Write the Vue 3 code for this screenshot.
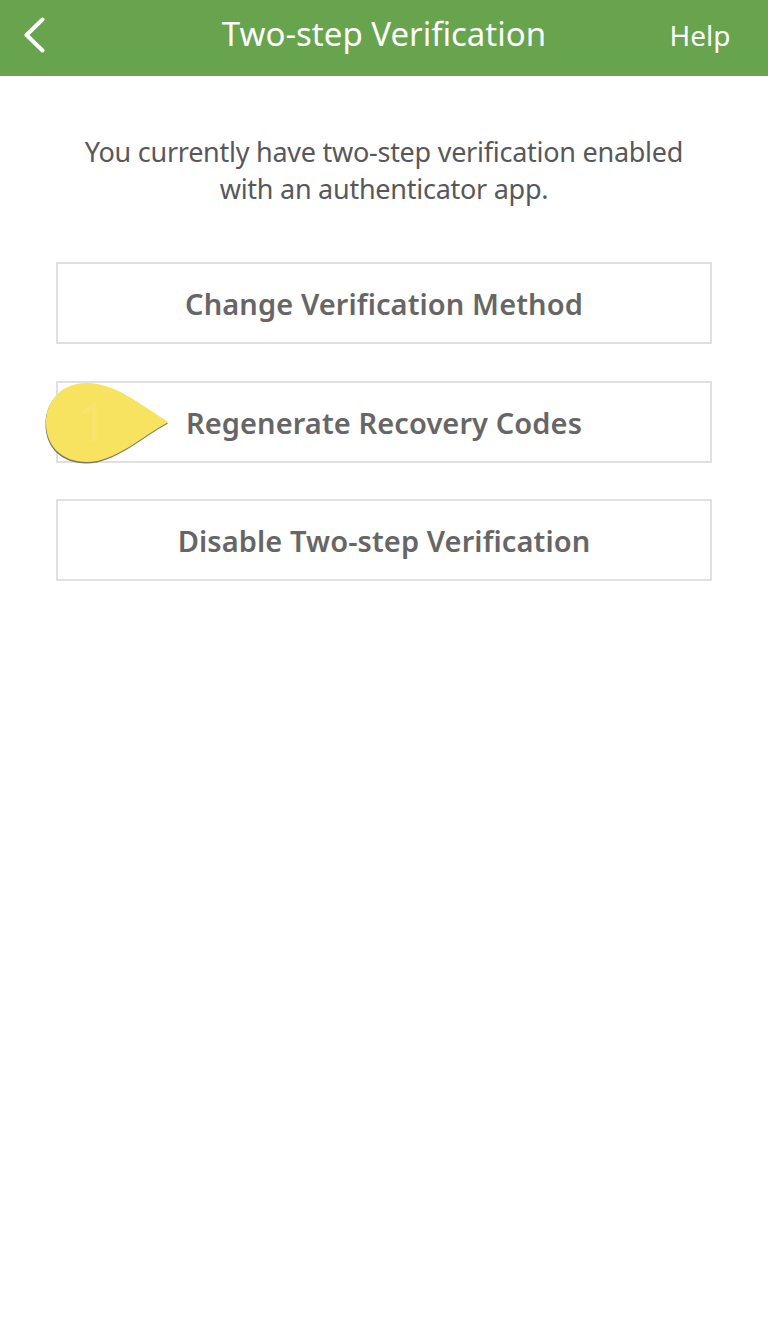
<template>
	<div class="page">
		<!-- Top bar -->
		<header class="top-bar">
			<svg class="back-icon" width="24" height="36" viewBox="0 0 24 36">
				<path d="M20.5 2.5 L4.5 18 L20.5 33.5" fill="none" stroke="#fff" stroke-width="4" stroke-linecap="round" stroke-linejoin="round" />
			</svg>
			<h1 class="title">Two-step Verification</h1>
			<span class="help">Help</span>
		</header>

		<main class="content">
			<p class="intro">
				You currently have two-step verification enabled<br />with an authenticator app.
			</p>
			<div class="actions">
				<div v-for="item in actions" :key="item" class="action">{{ item }}</div>
				<!-- Annotation marker -->
				<div class="marker">
					<svg width="126" height="84" viewBox="0 0 126 84">
						<path class="marker-shadow" :d="dropPath" />
						<path class="marker-body" :d="dropPath" />
						<text class="marker-num" x="33" y="58">1</text>
					</svg>
				</div>
			</div>
		</main>
	</div>
</template>

<script setup>
const actions = [
	"Change Verification Method",
	"Regenerate Recovery Codes",
	"Disable Two-step Verification",
];

const dropPath = "M123.5 39 C96 54 70 79 42 79 C17 79 1 63 1 40 C1 17 17 0 42 0 C70 0 96 22 123.5 39 Z";
</script>

<style>
html,
body {
	background: #fff;
}
</style>

<style scoped>
.page {
	width: 768px;
	height: 1323px;
	background: #fff;
	font-family: "Noto Sans", "Open Sans", sans-serif;
	overflow: hidden;
}
.top-bar {
	height: 76px;
	background: #68a34d;
	color: #fff;
	display: flex;
	align-items: center;
	position: relative;
	box-sizing: border-box;
}
.back-icon {
	position: absolute;
	left: 22px;
	top: 17px;
}
.title {
	flex: 1;
	margin: 0;
	text-align: center;
	font-size: 33px;
	font-weight: 400;
	line-height: 68px;
	padding-bottom: 8px;
}
.help {
	position: absolute;
	left: 669.5px;
	top: 15px;
	font-size: 28px;
	line-height: 40px;
}
.content {
	padding: 57px 56px 0;
}
.intro {
	margin: 0 -20px;
	text-align: center;
	font-size: 27px;
	line-height: 37px;
	letter-spacing: -0.26px;
	color: #58585a;
}
.actions {
	position: relative;
	margin-top: 55px;
	display: flex;
	flex-direction: column;
	gap: 36.5px;
}
.action {
	height: 82px;
	box-sizing: border-box;
	border: 2px solid #e0e0e0;
	padding-top: 1px;
	display: flex;
	align-items: center;
	justify-content: center;
	font-size: 29px;
	font-weight: 600;
	letter-spacing: 0.1px;
	color: #666;
}
.marker {
	position: absolute;
	left: -11px;
	top: 121px;
	line-height: 0;
}
.marker-shadow {
	fill: #7d7860;
	filter: blur(0.6px);
	transform: translate(-0.5px, 1.5px);
}
.marker-body {
	fill: #f8e360;
}
.marker-num {
	fill: #f9e56e;
	font-size: 52px;
	font-family: "Noto Sans", sans-serif;
}
</style>
